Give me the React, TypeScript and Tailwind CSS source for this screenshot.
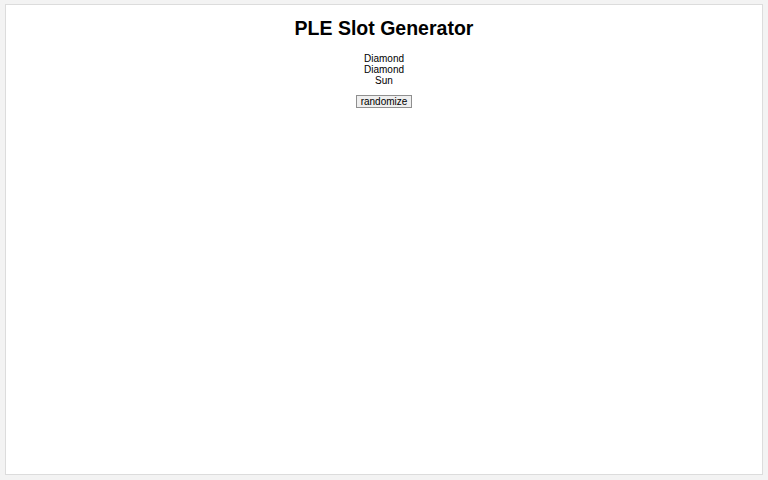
import React, { useState } from 'react';

const symbols = ['Diamond', 'Diamond', 'Sun'];

export default function App() {
  const [slots] = useState(symbols);

  return (
    <div className="h-[480px] w-[768px] bg-[#f3f3f3] px-[5px] pt-[4px] pb-[5px] font-['Liberation_Sans',Arial,sans-serif]">
      <div className="flex h-full flex-col items-center border border-[#dcdcdc] bg-white text-black">
        <h1 className="mt-[12px] text-[19.5px] font-bold leading-[22px]">PLE Slot Generator</h1>
        <div className="mt-[14px] flex flex-col items-center text-[10px] leading-[11px]">
          {slots.map((s, i) => (
            <div key={i}>{s}</div>
          ))}
        </div>
        <button className="mt-[9px] h-[13px] border border-[#8f8f8f] bg-[#efefef] px-[4px] text-[10px] leading-[11px]">
          randomize
        </button>
      </div>
    </div>
  );
}
